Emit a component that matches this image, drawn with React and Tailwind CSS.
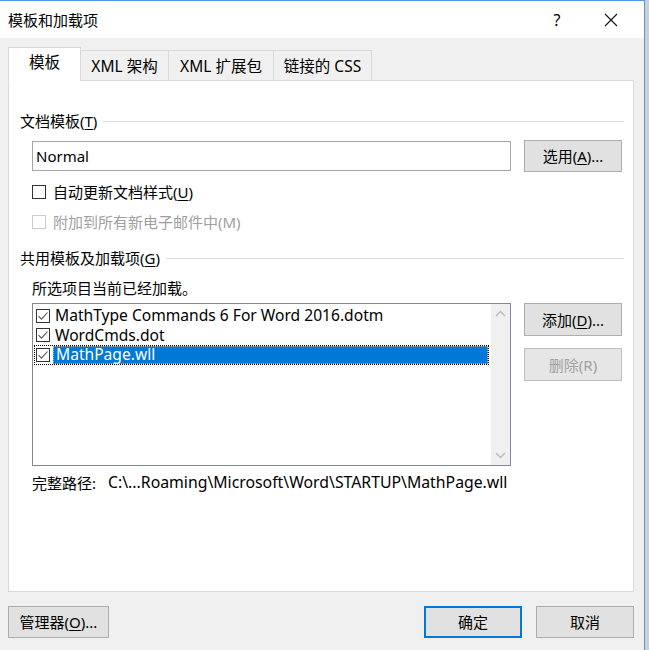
import React from 'react';

const U = ({ children }) => <span className="underline underline-offset-2">{children}</span>;

const Check = ({ checked, disabled }) => (
  <span
    className={`flex h-[14px] w-[14px] shrink-0 items-center justify-center border bg-white ${
      disabled ? 'border-[#cccccc]' : 'border-[#333333]'
    }`}
  >
    {checked && (
      <svg width="12" height="12" viewBox="0 0 12 12">
        <path d="M1.5 6.2 L4.5 9.2 L10.5 2.5" fill="none" stroke="#555555" strokeWidth="1.1" />
      </svg>
    )}
  </span>
);

const Btn = ({ children, className = '', disabled, primary }) => (
  <button
    type="button"
    className={`flex items-center justify-center bg-[#e1e1e1] text-[15px] leading-5 ${
      primary ? 'border-2 border-[#0078d7]' : 'border border-[#adadad]'
    } ${disabled ? 'bg-[#e6e6e6] border-[#bfbfbf] text-[#a0a0a0]' : 'text-black'} ${className}`}
  >
    {children}
  </button>
);

const SectionLabel = ({ children }) => (
  <div className="flex h-5 items-center gap-[6px]">
    <span className="whitespace-nowrap">{children}</span>
    <div className="h-px flex-1 bg-[#dcdcdc]" />
  </div>
);

const tabs = ['模板', 'XML 架构', 'XML 扩展包', '链接的 CSS'];
const tabW = ['w-[73px]', 'w-[89px]', 'w-[106px]', 'w-[99px]'];

const items = ['MathType Commands 6 For Word 2016.dotm', 'WordCmds.dot', 'MathPage.wll'];

export default function App() {
  return (
    <div
      className="flex h-[650px] w-[649px] bg-[#cfcfcf] text-[15px] text-black"
      style={{ fontFamily: '"Noto Sans", "Noto Sans CJK SC", sans-serif' }}
    >
      <div className="flex h-[650px] w-[645px] flex-col border-t border-r border-[#4f97e8] bg-[#f0f0f0]">
        {/* title bar */}
        <div className="flex h-[37px] shrink-0 items-center bg-white pr-[6px]">
          <span className="flex-1 pl-2 leading-5">模板和加载项</span>
          <span className="flex w-[54px] justify-center text-[16px]">?</span>
          <span className="flex w-[54px] justify-center">
            <svg width="14" height="14" viewBox="0 0 14 14">
              <path d="M1 1 L13 13 M13 1 L1 13" stroke="#111" strokeWidth="1.1" />
            </svg>
          </span>
        </div>

        <div className="flex flex-1 flex-col pl-2 pr-[10px]">
          {/* tabs */}
          <div className="relative z-10 mt-[9px] -mb-px flex h-[34px] items-end">
            {tabs.map((t, i) => (
              <div
                key={t}
                className={`flex items-center justify-center border border-[#d9d9d9] ${tabW[i]} ${
                  i === 0
                    ? 'h-[34px] border-b-white bg-white pb-1'
                    : 'h-[31px] -ml-px border-b-[#d9d9d9] bg-[#f0f0f0]'
                }`}
              >
                <span className="text-[15.5px] leading-5">{t}</span>
              </div>
            ))}
          </div>

          {/* panel */}
          <div className="flex h-[512px] flex-col border border-[#d9d9d9] bg-white pt-[30px] pr-[9px] pl-[11px]">
            <SectionLabel>
              文档模板(<U>T</U>)
            </SectionLabel>

            <div className="mt-[9px] flex items-center gap-[13px] pl-3">
              <div className="flex h-[30px] w-[479px] items-center border border-[#a5a5a5] bg-white px-[3px]">
                Normal
              </div>
              <Btn className="h-[32px] w-[98px]">
                选用(<U>A</U>)...
              </Btn>
            </div>

            <div className="mt-[10px] flex h-5 items-center gap-[7px] pl-3">
              <Check />
              <span>
                自动更新文档样式(<U>U</U>)
              </span>
            </div>
            <div className="mt-[10px] flex h-5 items-center gap-[7px] pl-3 text-[#a0a0a0]">
              <Check disabled />
              <span>附加到所有新电子邮件中(M)</span>
            </div>

            <div className="mt-4">
              <SectionLabel>
                共用模板及加载项(<U>G</U>)
              </SectionLabel>
            </div>

            <div className="mt-[10px] flex h-5 items-center pl-3">所选项目当前已经加载。</div>

            <div className="mt-[5px] flex items-start gap-[13px] pl-3">
              <div className="flex h-[163px] w-[479px] border border-[#828790] bg-white">
                <div className="flex flex-1 flex-col pt-[2px] pl-px pr-[2px]">
                  {items.map((it, i) => {
                    const sel = i === items.length - 1;
                    return (
                      <div
                        key={it}
                        className={`flex h-[19.5px] items-center ${
                          sel ? 'border border-dotted border-black' : 'border border-transparent'
                        }`}
                      >
                        <span className="pl-px">
                          <Check checked />
                        </span>
                        <span
                          className={`ml-[3px] flex h-full flex-1 items-center pl-[2px] text-[15.6px] leading-[17px] ${
                            sel ? 'border border-dotted border-[#f5a050] bg-[#0078d7] text-white' : ''
                          }`}
                        >
                          {it}
                        </span>
                      </div>
                    );
                  })}
                </div>
                <div className="flex w-[19px] flex-col items-center justify-between bg-[#f0f0f0] py-[6px]">
                  <svg width="11" height="7" viewBox="0 0 11 7">
                    <path d="M1 6 L5.5 1.5 L10 6" fill="none" stroke="#b9b9b9" strokeWidth="1.4" />
                  </svg>
                  <svg width="11" height="7" viewBox="0 0 11 7">
                    <path d="M1 1 L5.5 5.5 L10 1" fill="none" stroke="#b9b9b9" strokeWidth="1.4" />
                  </svg>
                </div>
              </div>
              <div className="flex flex-col gap-3">
                <Btn className="h-[33px] w-[98px]">
                  添加(<U>D</U>)...
                </Btn>
                <Btn disabled className="h-[33px] w-[98px]">
                  删除(R)
                </Btn>
              </div>
            </div>

            <div className="mt-[7px] flex h-5 items-center gap-[12px] pl-3">
              <span>完整路径:</span>
              <span className="text-[15.8px]">C:\...Roaming\Microsoft\Word\STARTUP\MathPage.wll</span>
            </div>
          </div>

          {/* footer */}
          <div className="mt-[14px] flex items-center">
            <Btn className="h-[32px] w-[101px]">
              管理器(<U>O</U>)...
            </Btn>
            <div className="flex-1" />
            <Btn primary className="h-[32px] w-[98px]">
              确定
            </Btn>
            <Btn className="ml-[14px] h-[32px] w-[98px]">取消</Btn>
          </div>
        </div>
      </div>
    </div>
  );
}
